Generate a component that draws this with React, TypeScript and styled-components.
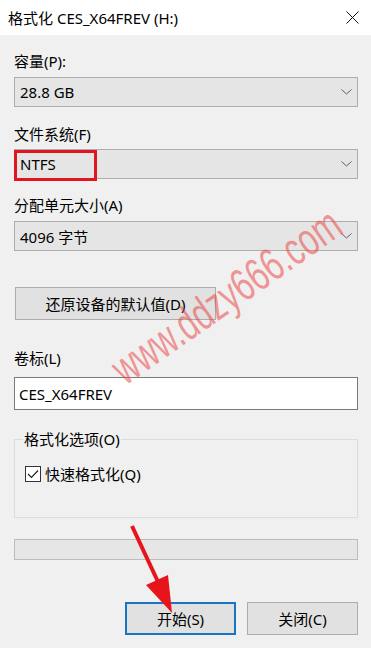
import React from "react"
import styled, { createGlobalStyle } from "styled-components"

const GlobalStyle = createGlobalStyle`
  body {
    margin: 0;
    background: #f0f0f0;
  }
`

const Dialog = styled.div`
  position: relative;
  width: 371px;
  height: 648px;
  overflow: hidden;
  background: #f0f0f0;
  font-family: "Segoe UI", "Noto Sans", "Noto Sans CJK SC", sans-serif;
  font-size: 15px;
  color: #000;
`

const TitleBar = styled.div`
  height: 35px;
  background: #fff;
  display: flex;
  align-items: center;
  justify-content: space-between;
  padding: 0 12px 0 8px;
`

const Body = styled.div`
  display: flex;
  flex-direction: column;
  padding: 16px 13px 0 14px;
`

const Label = styled.div<{ $top?: number; $gap?: number }>`
  line-height: 20px;
  margin-top: ${(p) => p.$top ?? 0}px;
  margin-bottom: ${(p) => p.$gap ?? 6}px;
`

const Select = styled.div`
  height: 30px;
  box-sizing: border-box;
  border: 1px solid #adadad;
  background: #e5e5e5;
  display: flex;
  align-items: center;
  justify-content: space-between;
  padding: 0 5px 0 5px;
`

const Button = styled.div<{ $primary?: boolean; $width: number }>`
  width: ${(p) => p.$width}px;
  height: 33px;
  box-sizing: border-box;
  border: ${(p) => (p.$primary ? "2px solid #1a74c4" : "1px solid #adadad")};
  background: #e1e1e1;
  display: flex;
  align-items: center;
  justify-content: center;
`

const ResetButton = styled(Button)`
  margin-top: 36px;
  margin-left: 1px;
`

const TextInput = styled.div`
  height: 33px;
  box-sizing: border-box;
  border: 1px solid #7a7a7a;
  background: #fff;
  display: flex;
  align-items: center;
  padding-left: 4px;
`

const Group = styled.fieldset`
  margin: 19px 0 0 0;
  height: 89px;
  box-sizing: border-box;
  border: 1px solid #dcdcdc;
  padding: 0 8px;
`

const Legend = styled.legend`
  line-height: 20px;
  padding: 0 1px;
`

const CheckRow = styled.label`
  display: flex;
  align-items: center;
  gap: 4px;
  margin-top: 15px;
  margin-left: 2px;
  line-height: 20px;
`

const CheckBox = styled.span`
  width: 16px;
  height: 16px;
  box-sizing: border-box;
  border: 1px solid #333;
  background: #fff;
  display: flex;
  align-items: center;
  justify-content: center;
`

const Progress = styled.div`
  margin-top: 21px;
  height: 21px;
  box-sizing: border-box;
  border: 1px solid #bcbcbc;
  background: #e6e6e6;
`

const Footer = styled.div`
  margin-top: 42px;
  display: flex;
  justify-content: flex-end;
  gap: 11px;
`

const Highlight = styled.div`
  position: absolute;
  left: 14px;
  top: 150px;
  width: 83px;
  height: 31px;
  box-sizing: border-box;
  border: 3px solid #e2161f;
`

const Watermark = styled.span`
  position: absolute;
  left: 226px;
  top: 296px;
  transform: translate(-50%, -50%) rotate(-35deg) scaleX(0.7);
  font-family: "Liberation Sans", Arial, sans-serif;
  font-size: 46px;
  color: rgba(235, 70, 70, 0.55);
  white-space: nowrap;
  pointer-events: none;
`

const Overlay = styled.svg`
  position: absolute;
  left: 0;
  top: 0;
  pointer-events: none;
`

function Chevron() {
  return (
    <svg width="11" height="6" viewBox="0 0 11 6">
      <path d="M0.5 0.5 L5.5 5 L10.5 0.5" fill="none" stroke="#606060" strokeWidth="1" />
    </svg>
  )
}

function Dropdown({ value }: { value: string }) {
  return (
    <Select>
      <span>{value}</span>
      <Chevron />
    </Select>
  )
}

export default function App() {
  return (
    <Dialog>
      <GlobalStyle />
      <TitleBar>
        <span>格式化 CES_X64FREV (H:)</span>
        <svg width="13" height="13" viewBox="0 0 13 13">
          <path d="M0.5 0.5 L12.5 12.5 M12.5 0.5 L0.5 12.5" stroke="#111" strokeWidth="1" />
        </svg>
      </TitleBar>
      <Body>
        <Label>容量(P):</Label>
        <Dropdown value="28.8 GB" />

        <Label $top={17} $gap={5}>文件系统(F)</Label>
        <Dropdown value="NTFS" />

        <Label $top={16}>分配单元大小(A)</Label>
        <Dropdown value="4096 字节" />

        <ResetButton $width={201}>还原设备的默认值(D)</ResetButton>

        <Label $top={28} $gap={9}>卷标(L)</Label>
        <TextInput>CES_X64FREV</TextInput>

        <Group>
          <Legend>格式化选项(O)</Legend>
          <CheckRow>
            <CheckBox>
              <svg width="12" height="10" viewBox="0 0 12 10">
                <path d="M1 5 L4.5 8.5 L11 1.5" fill="none" stroke="#222" strokeWidth="1.2" />
              </svg>
            </CheckBox>
            快速格式化(Q)
          </CheckRow>
        </Group>

        <Progress />

        <Footer>
          <Button $primary $width={111}>开始(S)</Button>
          <Button $width={111}>关闭(C)</Button>
        </Footer>
      </Body>

      <Highlight />
      <Watermark>www.ddzy666.com</Watermark>
      <Overlay width="371" height="648" viewBox="0 0 371 648">
        <line x1="132" y1="526" x2="159" y2="584" stroke="#e8141c" strokeWidth="4" />
        <polygon points="146,585 168,575 172,613" fill="#e8141c" />
      </Overlay>
    </Dialog>
  )
}
